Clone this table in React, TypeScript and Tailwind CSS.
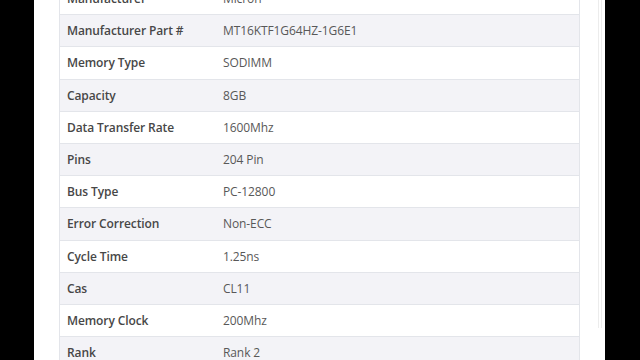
const specs: [string, string][] = [
  ['Manufacturer', 'Micron'],
  ['Manufacturer Part #', 'MT16KTF1G64HZ-1G6E1'],
  ['Memory Type', 'SODIMM'],
  ['Capacity', '8GB'],
  ['Data Transfer Rate', '1600Mhz'],
  ['Pins', '204 Pin'],
  ['Bus Type', 'PC-12800'],
  ['Error Correction', 'Non-ECC'],
  ['Cycle Time', '1.25ns'],
  ['Cas', 'CL11'],
  ['Memory Clock', '200Mhz'],
  ['Rank', 'Rank 2'],
];

export default function App() {
  return (
    <div className="flex h-screen w-full overflow-hidden bg-black font-['Open_Sans',sans-serif]">
      <div className="w-[34px] shrink-0 bg-black" />
      <div className="flex flex-1 bg-white pl-[25px]">
        {/* Spec table */}
        <div className="-mt-[17px] w-[521px] shrink-0 self-start border-x border-[#e3e5ea]">
          {specs.map(([label, value], i) => (
            <div
              key={label}
              className={`flex h-[32.2px] items-center border-b border-[#e3e5ea] pt-px ${i % 2 === 1 ? 'bg-[#f3f3f7]' : 'bg-white'}`}
            >
              <div className="w-[163px] shrink-0 pl-[7px] text-[12px] font-semibold tracking-[-0.1px] text-[#474747]">{label}</div>
              <div className="text-[12px] tracking-[-0.1px] text-[#585858]">{value}</div>
            </div>
          ))}
        </div>
        {/* Scrollbar track */}
        <div className="ml-[18px] h-[328px] w-[4px] border-x border-[#ececec]" />
      </div>
      <div className="w-[35px] shrink-0 bg-black" />
    </div>
  );
}
